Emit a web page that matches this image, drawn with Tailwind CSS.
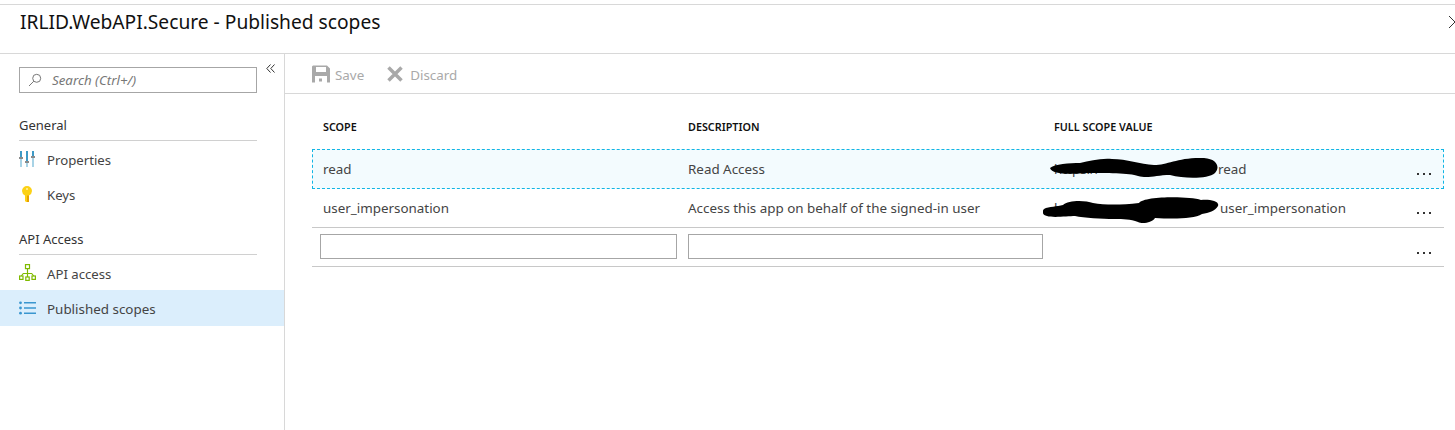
<!DOCTYPE html>
<html lang="en">
<head>
    <meta charset="UTF-8" />
    <title>IRLID.WebAPI.Secure - Published scopes</title>
    <script src="https://cdn.jsdelivr.net/npm/@tailwindcss/browser@4"></script>
</head>
<body class="h-[430px] w-[1455px] overflow-hidden bg-white font-['Noto_Sans',sans-serif] text-[13.4px] text-[#444]">

<div class="h-1 bg-white"></div>

<!-- Blade header -->
<header class="h-[50px] border-y border-[#d8d8d8] flex justify-between overflow-hidden">
    <h1 class="pl-[20px] pt-[3px] text-[19.2px] leading-[28px] text-[#111]">IRLID.WebAPI.Secure - Published scopes</h1>
    <svg class="mt-[10px] mr-[-1px] shrink-0" width="8" height="14" viewBox="0 0 8 14" fill="none" stroke="#333" stroke-width="1"><path d="M1 1l6 6-6 6"/></svg>
</header>

<div class="flex h-[376px]">

    <!-- Sidebar -->
    <nav class="relative w-[285px] shrink-0 border-r border-[#d8d8d8]">
        <div class="ml-[19px] mt-[13px] w-[238px] h-[26px] border border-[#a6a6a6] flex items-center">
            <svg class="ml-[8px]" width="14" height="14" viewBox="0 0 14 14" fill="none" stroke="#777" stroke-width="1"><circle cx="8.7" cy="5.3" r="4"/><path d="M5.8 8.2L1 13"/></svg>
            <span class="ml-[10px] pt-[2px] text-[13.3px] italic text-[#777]">Search (Ctrl+/)</span>
        </div>
        <svg class="absolute left-[266px] top-[10px]" width="9" height="9" viewBox="0 0 9 9" fill="none" stroke="#333" stroke-width="1"><path d="M4.5 0.5L0.8 4.5l3.7 4M8.5 0.5L4.8 4.5l3.7 4"/></svg>

        <div class="mt-[20px] mx-[19px] w-[238px] h-[28px] pt-[2px] border-b border-[#d0d0d0] text-[13px] leading-[20px] text-[#333]">General</div>
        <a class="flex items-center h-[35px] pl-[19px]">
            <svg width="16" height="16" viewBox="0 0 16 16"><path fill="#a8d3e6" d="M1 0h2v16H1zM7 0h2v16H7zM13 0h2v16h-2z"/><path fill="#3e9ac6" d="M1 0h2v6H1zM7 0h2v11H7zM13 0h2v5h-2z"/><path fill="#8a8a8a" d="M0 6h4v2H0zM6 10h4v2H6zM12 5h4v2h-4z"/></svg>
            <span class="ml-[12px] pt-[4px] text-[13.2px]">Properties</span>
        </a>
        <a class="flex items-center h-[35px] pl-[19px]">
            <svg class="ml-[2px]" width="12" height="16" viewBox="0 0 12 16"><path fill="#fcd116" d="M6 0a5 5 0 0 1 5 5 5 5 0 0 1-3 4.4V16H5l-1-1v-5.600A5 5 0 0 1 1 5a5 5 0 0 1 5-5z"/><path fill="#e8a200" d="M6 9.500h2V16H6z"/><circle cx="6" cy="3" r="1" fill="#fff2a8"/></svg>
            <span class="ml-[14px] pt-[4px] text-[13.2px]">Keys</span>
        </a>

        <div class="mt-[16px] mx-[19px] w-[238px] h-[28px] pt-[2px] border-b border-[#d0d0d0] text-[13px] leading-[20px] text-[#333]">API Access</div>
        <a class="flex items-center h-[35px] pl-[19px]">
            <svg width="17" height="17" viewBox="0 0 17 17" fill="none" stroke="#7fba00" stroke-width="1.200"><rect x="6.500" y="0.600" width="4" height="4"/><rect x="0.600" y="12" width="3.400" height="3.400"/><rect x="6.800" y="13" width="3.400" height="3.400"/><rect x="13" y="12" width="3.400" height="3.400"/><path d="M8.500 4.600V13M2.300 12l2-2.500h8.400l2 2.500"/></svg>
            <span class="ml-[11px] pt-[4px] text-[13.2px]">API access</span>
        </a>
        <a class="flex items-center h-[36px] pl-[19px] bg-[#dbeefc]">
            <svg width="17" height="14" viewBox="0 0 17 14" fill="#3a96cf"><circle cx="1.500" cy="1.800" r="1.400"/><circle cx="1.500" cy="7" r="1.400"/><circle cx="1.500" cy="12.200" r="1.400"/><path d="M5 1h12v1.600H5zM5 6.200h12v1.600H5zM5 11.400h12V13H5z"/></svg>
            <span class="ml-[11px] pt-[2px] text-[13.4px]">Published scopes</span>
        </a>
    </nav>

    <main class="flex-1 min-w-0">
        <!-- Toolbar -->
        <div class="h-[40px] border-b border-[#d8d8d8] flex items-center pl-[27px] text-[#a9a9a9]">
            <svg width="18" height="18" viewBox="0 0 18 18"><path fill="#a9a9a9" fill-rule="evenodd" d="M0 1.500L1 0.500h14l3 3V17.500H0zM4 2v5h10V2zM3 11v6.500h12V11z"/><rect x="7" y="13.500" width="3" height="3" fill="#a9a9a9"/></svg>
            <span class="ml-[5px] pt-[4px] text-[13.4px]">Save</span>
            <svg class="ml-[23px]" width="16" height="16" viewBox="0 0 16 16" stroke="#a9a9a9" stroke-width="3.500"><path d="M1.500 1.500l13 13M14.500 1.500l-13 13"/></svg>
            <span class="ml-[7px] pt-[4px] text-[13.4px]">Discard</span>
        </div>

        <!-- Scope grid -->
        <div class="ml-[27px] mr-[11px]">
            <div class="grid grid-cols-[365px_366px_1fr] h-[55px] items-center text-[10.8px] font-semibold text-[#111] pt-[12px]">
                <div class="pl-[11px]">SCOPE</div>
                <div class="pl-[11px]">DESCRIPTION</div>
                <div class="pl-[11px]">FULL SCOPE VALUE</div>
            </div>

            <div class="relative grid grid-cols-[365px_366px_1fr] h-[40px] items-center bg-[#f3fbfe] border border-dashed border-[#11b5e4]">
                <div class="pl-[10px]">read</div>
                <div class="pl-[10px]">Read Access</div>
                <div class="pl-[10px] flex"><span class="w-[164px]">https://</span><span>read</span></div>
                <div class="absolute right-[12px] top-[23px] flex gap-[4px]">
                    <span class="size-[2px] bg-[#333]"></span><span class="size-[2px] bg-[#333]"></span><span class="size-[2px] bg-[#333]"></span>
                </div>
                <svg class="absolute left-[737px] top-[7px]" width="168" height="22" viewBox="0 0 168 22"><path fill="#000" d="M0 11C4 7 20 6 30 6 40 4 50 1 62 2c15 0 28 5 42 6 14 0 24-8 50-7 14 1 16 10 11 15-7 6-30 6-45 2-14 0-22 4-32 1C80 16 55 16 38 16 20 17 2 18 0 11z"/></svg>
            </div>

            <div class="relative grid grid-cols-[365px_366px_1fr] h-[39px] items-center border-b border-[#c8c8c8]">
                <div class="pl-[11px] pt-[1px]">user_impersonation</div>
                <div class="pl-[11px] pt-[1px]">Access this app on behalf of the signed-in user</div>
                <div class="pl-[11px] pt-[1px] flex"><span class="w-[166px]">h</span><span>user_impersonation</span></div>
                <div class="absolute right-[13px] top-[23px] flex gap-[4px]">
                    <span class="size-[2px] bg-[#333]"></span><span class="size-[2px] bg-[#333]"></span><span class="size-[2px] bg-[#333]"></span>
                </div>
                <svg class="absolute left-[731px] top-[8px]" width="178" height="27" viewBox="0 0 178 27"><path fill="#000" d="M1 12C6 9 14 10 20 8 25 3 42 3 50 6 62 8 78 8 96 6c5-7 50-7 62-3 8-1 19 1 17 6-3 5-9 7-16 8-8 5-28 5-47 4-3 5-13 6-17 4-8-3-14-3-24-3-12 0-30-1-39-3C25 19 10 21 4 19-1 18-1 14 1 12z"/></svg>
            </div>

            <div class="relative grid grid-cols-[365px_366px_1fr] h-[39px] items-center border-b border-[#c8c8c8]">
                <div class="pl-[8px]"><input class="w-[357px] h-[25px] -mt-[1px] border border-[#a6a6a6] bg-white block" /></div>
                <div class="pl-[11px]"><input class="w-[355px] h-[25px] -mt-[1px] border border-[#a6a6a6] bg-white block" /></div>
                <div></div>
                <div class="absolute right-[13px] top-[24px] flex gap-[4px]">
                    <span class="size-[2px] bg-[#333]"></span><span class="size-[2px] bg-[#333]"></span><span class="size-[2px] bg-[#333]"></span>
                </div>
            </div>
        </div>
    </main>
</div>

</body>
</html>
